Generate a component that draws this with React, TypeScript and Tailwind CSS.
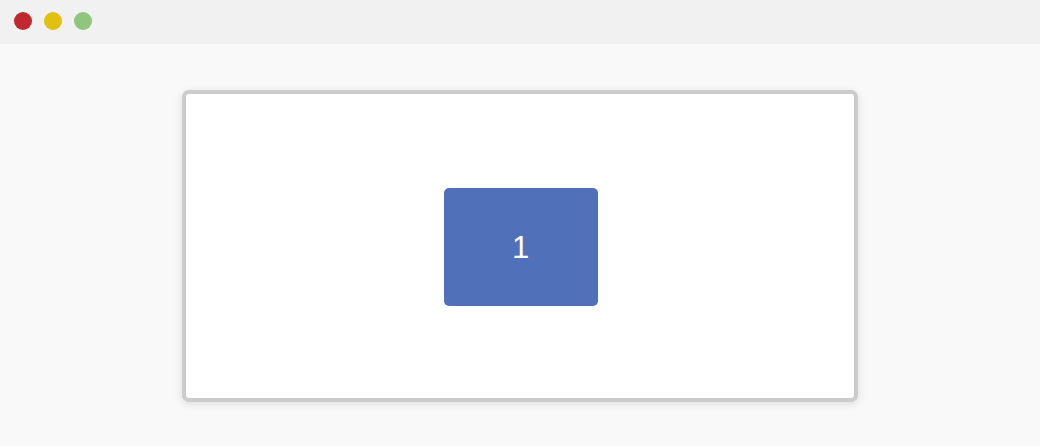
export default function App() {
  return (
    <div className="w-[1040px] h-[446px] flex flex-col bg-[#f9f9f9]" style={{ fontFamily: '"Liberation Sans", Arial, sans-serif' }}>
      <div className="h-[44px] bg-[#f1f1f1] flex items-center gap-[12px] px-[14px] pb-[2px] shrink-0">
        <div className="w-[18px] h-[18px] rounded-full bg-[#c0282f]" />
        <div className="w-[18px] h-[18px] rounded-full bg-[#e2c00f]" />
        <div className="w-[18px] h-[18px] rounded-full bg-[#90c57c]" />
      </div>
      <div className="flex justify-center pt-[46px]">
        <div className="w-[676px] h-[312px] border-[4px] border-[#cccccc] rounded-[7px] bg-white shadow-[0_2px_8px_rgba(0,0,0,0.12)] flex items-center justify-center">
          <div className="w-[154px] h-[118px] rounded-[5px] bg-[#5070b9] flex items-center justify-center text-white text-[31px] mt-[2px] ml-[1px] pt-[2px]">
            1
          </div>
        </div>
      </div>
    </div>
  );
}
